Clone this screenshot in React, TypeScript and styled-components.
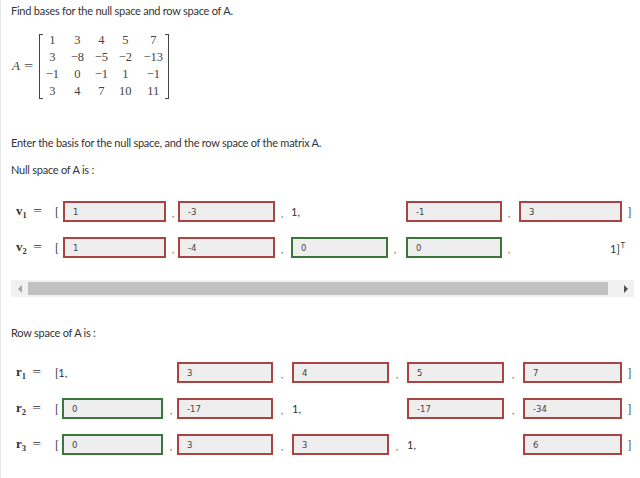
import React from 'react';
import styled, { createGlobalStyle } from 'styled-components';

const Global = createGlobalStyle`
  html, body { margin: 0; padding: 0; background: #fff; }
  body { font-family: Lato, "Liberation Sans", sans-serif; color: #333; }
`;

const Page = styled.div`
  box-sizing: border-box;
  width: 640px;
  min-height: 478px;
  border-left: 1px solid #e8e8e8;
  padding: 3px 6px 0 10px;
`;

const Para = styled.p<{ $mt: number }>`
  margin: ${(p) => p.$mt}px 0 0;
  font-size: 11px;
  line-height: 16px;
  letter-spacing: -0.24px;
  color: #333;
`;

/* ---------- matrix ---------- */
const MatrixLine = styled.div`
  display: flex;
  align-items: center;
  margin-top: 15px;
  height: 64px;
  font-family: "Liberation Serif", serif;
  font-size: 13px;
  color: #444;
`;

const MathName = styled.span`
  font-style: italic;
  margin-left: 1px;
`;

const Equals = styled.span`
  display: inline-block;
  transform: scaleX(1.25);
  margin: 0 7px 0 5px;
`;

const Bracket = styled.div<{ $side: 'left' | 'right' }>`
  width: 3px;
  height: 63px;
  border: 1px solid #444;
  ${(p) => (p.$side === 'left' ? 'border-right: none;' : 'border-left: none;')}
`;

const MatrixGrid = styled.div`
  display: grid;
  grid-template-columns: 18px 32px 16px 32px 24px;
  grid-auto-rows: 17px;
  align-items: center;
  justify-items: center;
  height: 64px;
  align-content: center;
  white-space: nowrap;
  font-size: 12.5px;
`;

/* ---------- answer tables ---------- */
const Rows = styled.div<{ $mt: number }>`
  display: flex;
  flex-direction: column;
  gap: 15px;
  margin-top: ${(p) => p.$mt}px;
`;

const Row = styled.div<{ $cols: string }>`
  display: grid;
  grid-template-columns: ${(p) => p.$cols};
  align-items: center;
  height: 21px;
`;

const Label = styled.div`
  font-family: "Liberation Serif", serif;
  font-size: 13px;
  color: #333;
  padding-left: 5px;
  white-space: nowrap;
  b { font-weight: bold; }
  sub { font-size: 8.5px; vertical-align: -3px; font-weight: bold; }
`;

const LabelEq = styled.span`
  display: inline-block;
  transform: scaleX(1.2);
  margin-left: 7px;
`;

const Plain = styled.div<{ $span?: number; $end?: boolean; $pad?: number }>`
  font-size: 11px;
  color: #333;
  white-space: nowrap;
  ${(p) => (p.$span ? `grid-column: span ${p.$span};` : '')}
  ${(p) => (p.$end ? 'justify-self: end;' : '')}
  padding-left: ${(p) => p.$pad ?? 0}px;
  padding-right: ${(p) => (p.$end ? 9 : 0)}px;
  sup { font-size: 7px; vertical-align: 5px; margin-left: 1px; }
`;

const Comma = styled.div<{ $pad: number }>`
  align-self: end;
  padding: 0 0 4px ${(p) => p.$pad}px;
  font-size: 9px;
  line-height: 9px;
  color: #555;
`;

const Field = styled.input<{ $ok?: boolean }>`
  box-sizing: border-box;
  width: 100%;
  height: 21px;
  margin: 0;
  padding: 0 0 0 8px;
  border: 2px solid ${(p) => (p.$ok ? '#3c763d' : '#a94442')};
  border-radius: 0;
  background: #eeeeee;
  font-family: "DejaVu Sans", sans-serif;
  font-size: 8.5px;
  color: #444;
  outline: none;
`;

const Empty = styled.div``;

/* ---------- scrollbar ---------- */
const Track = styled.div`
  display: flex;
  align-items: center;
  width: 623px;
  height: 17px;
  margin-top: 22px;
  background: #f1f1f1;
`;

const ArrowBtn = styled.div`
  width: 17px;
  height: 17px;
  display: flex;
  align-items: center;
  justify-content: center;
`;

const Tri = styled.div<{ $dir: 'left' | 'right' }>`
  width: 0;
  height: 0;
  border-top: 4px solid transparent;
  border-bottom: 4px solid transparent;
  ${(p) =>
    p.$dir === 'left'
      ? 'border-right: 4px solid #a3a3a3;'
      : 'border-left: 4px solid #505050;'}
`;

const Thumb = styled.div`
  width: 580px;
  height: 13px;
  background: #c1c1c1;
  margin-right: auto;
`;

const NULL_COLS = '44px 8px 103px 12px 97px 16px 97px 18px 96px 17px 103px 12px';
const ROW_COLS = '44px 7px 101px 14px 96px 19px 97px 18px 97px 19px 99px 12px';

const Vec = ({ name, sub }: { name: string; sub: string }) => (
  <Label>
    <b>{name}</b>
    <sub>{sub}</sub>
    <LabelEq>=</LabelEq>
  </Label>
);

const m: string[][] = [
  ['1', '3', '4', '5', '7'],
  ['3', '−8', '−5', '−2', '−13'],
  ['−1', '0', '−1', '1', '−1'],
  ['3', '4', '7', '10', '11'],
];

export default function App() {
  return (
    <>
      <Global />
      <Page>
        <Para $mt={0}>Find bases for the null space and row space of A.</Para>
        <MatrixLine>
          <MathName>A</MathName>
          <Equals>=</Equals>
          <Bracket $side="left" />
          <MatrixGrid>
            {m.flat().map((v, i) => (
              <span key={i}>{v}</span>
            ))}
          </MatrixGrid>
          <Bracket $side="right" />
        </MatrixLine>

        <Para $mt={37}>Enter the basis for the null space, and the row space of the matrix A.</Para>
        <Para $mt={11}>Null space of A is :</Para>

        <Rows $mt={23}>
          <Row $cols={NULL_COLS}>
            <Vec name="v" sub="1" />
            <Plain>[</Plain>
            <Field readOnly value="1" />
            <Comma $pad={6}>,</Comma>
            <Field readOnly value="-3" />
            <Comma $pad={6}>,</Comma>
            <Plain $pad={0}>1,</Plain>
            <Empty />
            <Field readOnly value="-1" />
            <Comma $pad={6}>,</Comma>
            <Field readOnly value="3" />
            <Plain $pad={6}>]</Plain>
          </Row>
          <Row $cols={NULL_COLS}>
            <Vec name="v" sub="2" />
            <Plain>[</Plain>
            <Field readOnly value="1" />
            <Comma $pad={6}>,</Comma>
            <Field readOnly value="-4" />
            <Comma $pad={6}>,</Comma>
            <Field readOnly $ok value="0" />
            <Comma $pad={6}>,</Comma>
            <Field readOnly $ok value="0" />
            <Comma $pad={6}>,</Comma>
            <Plain $span={2} $end>
              1]<sup>T</sup>
            </Plain>
          </Row>
        </Rows>

        <Track>
          <ArrowBtn>
            <Tri $dir="left" />
          </ArrowBtn>
          <Thumb />
          <ArrowBtn>
            <Tri $dir="right" />
          </ArrowBtn>
        </Track>

        <Para $mt={28}>Row space of A is :</Para>

        <Rows $mt={21}>
          <Row $cols={ROW_COLS}>
            <Vec name="r" sub="1" />
            <Plain $span={2}>[1,</Plain>
            <Empty />
            <Field readOnly value="3" />
            <Comma $pad={8}>,</Comma>
            <Field readOnly value="4" />
            <Comma $pad={7}>,</Comma>
            <Field readOnly value="5" />
            <Comma $pad={8}>,</Comma>
            <Field readOnly value="7" />
            <Plain $pad={6}>]</Plain>
          </Row>
          <Row $cols={ROW_COLS}>
            <Vec name="r" sub="2" />
            <Plain>[</Plain>
            <Field readOnly $ok value="0" />
            <Comma $pad={7}>,</Comma>
            <Field readOnly value="-17" />
            <Comma $pad={8}>,</Comma>
            <Plain $pad={0}>1,</Plain>
            <Empty />
            <Field readOnly value="-17" />
            <Comma $pad={8}>,</Comma>
            <Field readOnly value="-34" />
            <Plain $pad={6}>]</Plain>
          </Row>
          <Row $cols={ROW_COLS}>
            <Vec name="r" sub="3" />
            <Plain>[</Plain>
            <Field readOnly $ok value="0" />
            <Comma $pad={7}>,</Comma>
            <Field readOnly value="3" />
            <Comma $pad={8}>,</Comma>
            <Field readOnly value="3" />
            <Comma $pad={7}>,</Comma>
            <Plain $pad={0}>1,</Plain>
            <Empty />
            <Field readOnly value="6" />
            <Plain $pad={6}>]</Plain>
          </Row>
        </Rows>
      </Page>
    </>
  );
}
